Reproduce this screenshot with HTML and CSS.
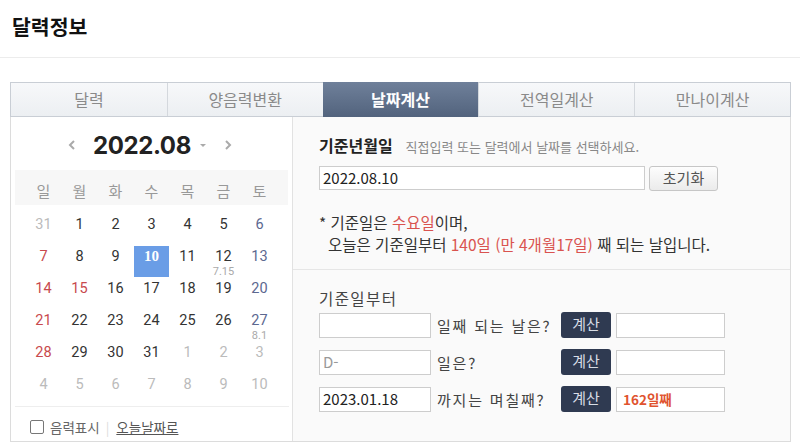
FILE: index.html
```html
<!DOCTYPE html>
<html lang="ko">
<head>
<meta charset="utf-8">
<title>달력정보</title>
<link rel="stylesheet" href="styles.css">
</head>
<body>
<h1 class="title">달력정보</h1>
<div class="widget">
  <ul class="tabs">
    <li class="tab">달력</li>
    <li class="tab">양음력변환</li>
    <li class="tab active">날짜계산</li>
    <li class="tab">전역일계산</li>
    <li class="tab">만나이계산</li>
  </ul>
  <div class="body">
    <div class="cal">
      <div class="cal-head">
        <svg class="arrow" width="8" height="10" viewBox="0 0 8 10"><polyline points="6,1 2,5 6,9" fill="none" stroke="#aaa" stroke-width="2"/></svg>
        <span class="ym">2022.08</span>
        <span class="caret"></span>
        <svg class="arrow next" width="8" height="10" viewBox="0 0 8 10"><polyline points="2,1 6,5 2,9" fill="none" stroke="#aaa" stroke-width="2"/></svg>
      </div>
      <div class="week">
        <span>일</span><span>월</span><span>화</span><span>수</span><span>목</span><span>금</span><span>토</span>
      </div>
      <div class="days">
        <div class="d other"><b>31</b></div>
        <div class="d"><b>1</b></div>
        <div class="d"><b>2</b></div>
        <div class="d"><b>3</b></div>
        <div class="d"><b>4</b></div>
        <div class="d"><b>5</b></div>
        <div class="d sat"><b>6</b></div>

        <div class="d sun"><b>7</b></div>
        <div class="d"><b>8</b></div>
        <div class="d"><b>9</b></div>
        <div class="d sel"><b>10</b></div>
        <div class="d"><b>11</b></div>
        <div class="d"><b>12</b><i>7.15</i></div>
        <div class="d sat"><b>13</b></div>

        <div class="d sun"><b>14</b></div>
        <div class="d sun"><b>15</b></div>
        <div class="d"><b>16</b></div>
        <div class="d"><b>17</b></div>
        <div class="d"><b>18</b></div>
        <div class="d"><b>19</b></div>
        <div class="d sat"><b>20</b></div>

        <div class="d sun"><b>21</b></div>
        <div class="d"><b>22</b></div>
        <div class="d"><b>23</b></div>
        <div class="d"><b>24</b></div>
        <div class="d"><b>25</b></div>
        <div class="d"><b>26</b></div>
        <div class="d sat"><b>27</b><i>8.1</i></div>

        <div class="d sun"><b>28</b></div>
        <div class="d"><b>29</b></div>
        <div class="d"><b>30</b></div>
        <div class="d"><b>31</b></div>
        <div class="d other"><b>1</b></div>
        <div class="d other"><b>2</b></div>
        <div class="d other"><b>3</b></div>

        <div class="d other"><b>4</b></div>
        <div class="d other"><b>5</b></div>
        <div class="d other"><b>6</b></div>
        <div class="d other"><b>7</b></div>
        <div class="d other"><b>8</b></div>
        <div class="d other"><b>9</b></div>
        <div class="d other"><b>10</b></div>
      </div>
      <div class="cal-foot">
        <span class="check"></span>
        <span class="lunar">음력표시</span>
        <span class="sep">|</span>
        <span class="today">오늘날짜로</span>
      </div>
    </div>
    <div class="calc">
      <div class="base">
        <div class="label-row">
          <strong class="label">기준년월일</strong>
          <span class="hint">직접입력 또는 달력에서 날짜를 선택하세요.</span>
        </div>
        <div class="input-row">
          <div class="field wide">2022.08.10</div>
          <div class="btn-reset">초기화</div>
        </div>
        <p class="note">* 기준일은 <em>수요일</em>이며,</p>
        <p class="note indent">오늘은 기준일부터 <em>140일 (만 4개월17일)</em> 째 되는 날입니다.</p>
      </div>
      <div class="ops">
        <div class="ops-title">기준일부터</div>
        <div class="op">
          <div class="field small"></div>
          <span class="op-text">일째 되는 날은?</span>
          <div class="btn-calc">계산</div>
          <div class="field result"></div>
        </div>
        <div class="op">
          <div class="field small placeholder">D-</div>
          <span class="op-text">일은?</span>
          <div class="btn-calc">계산</div>
          <div class="field result"></div>
        </div>
        <div class="op">
          <div class="field small">2023.01.18</div>
          <span class="op-text">까지는 며칠째?</span>
          <div class="btn-calc">계산</div>
          <div class="field result answer">162일째</div>
        </div>
      </div>
    </div>
  </div>
</div>
</body>
</html>
```
FILE: styles.css
```css
* { box-sizing: border-box; }

body {
  margin: 0;
  background: #fff;
  color: #333;
  font-family: "Noto Sans CJK KR", "Noto Sans", sans-serif;
}

.title {
  margin: 0;
  height: 58px;
  padding-left: 12px;
  font-size: 20.5px;
  font-weight: 700;
  line-height: 52px;
  color: #111;
  border-bottom: 1px solid #ececec;
}

.widget {
  margin: 24px 9px 0 10px;
}

/* tabs */
.tabs {
  list-style: none;
  margin: 0;
  padding: 0;
  display: grid;
  grid-template-columns: repeat(5, 1fr);
  height: 35px;
  border: 1px solid #c9ced5;
  background: linear-gradient(#f7f8fa, #eceff2);
}

.tab {
  text-align: center;
  font-size: 16px;
  line-height: 32px;
  color: #8a8a8a;
  border-left: 1px solid #d4d8dd;
}

.tab:first-child { border-left: 0; }

.tab.active {
  margin: -1px 0;
  line-height: 34px;
  color: #fff;
  font-weight: 700;
  border-left: 0;
  background: linear-gradient(#6f809a, #52637d);
}

/* body */
.body {
  display: grid;
  grid-template-columns: 282px 1fr;
  height: 325px;
  border: 1px solid #dcdcdc;
  border-top: 0;
}

/* calendar */
.cal {
  border-right: 1px solid #e2e2e2;
  background: #fff;
}

.cal-head {
  height: 53px;
  display: flex;
  align-items: center;
  padding: 3px 0 0 57px;
}

.ym {
  margin-left: 17px;
  font-family: Inter, "Liberation Sans", sans-serif;
  font-weight: 700;
  font-size: 24px;
  letter-spacing: -0.4px;
  color: #222;
}

.caret {
  margin-left: 9px;
  width: 0;
  height: 0;
  border-left: 3px solid transparent;
  border-right: 3px solid transparent;
  border-top: 3px solid #aaa;
}

.arrow.next { margin-left: 18px; }

.week {
  margin: 0 4px;
  height: 35px;
  background: #f7f7f7;
  display: grid;
  grid-template-columns: repeat(7, 36px);
  justify-content: center;
  align-items: center;
  padding-top: 6px;
}

.week span {
  text-align: center;
  font-size: 15px;
  color: #999;
}

.days {
  margin-top: 9px;
  display: grid;
  grid-template-columns: repeat(7, 36px);
  grid-auto-rows: 32px;
  justify-content: center;
  font-family: Roboto, "Liberation Sans", sans-serif;
}

.d {
  display: flex;
  flex-direction: column;
  align-items: center;
  color: #333;
}

.d b {
  font-weight: 400;
  font-size: 14.5px;
  line-height: 19px;
  margin-top: 1px;
}

.d i {
  font-style: normal;
  font-size: 11px;
  line-height: 12px;
  color: #aaa;
}

.d.sun { color: #c8494d; }
.d.sat { color: #5c6890; }
.d.other { color: #bbb; }

.d.sel {
  margin: 0 0.5px 1px;
  background: #6a9de6;
  color: #fff;
}

.d.sel b {
  font-family: "Liberation Serif", serif;
  font-weight: 700;
  font-size: 15px;
}

.cal-foot {
  margin: 0 3px 0 4px;
  height: 35px;
  border-top: 1px solid #eee;
  display: flex;
  align-items: center;
  padding: 5px 0 0 15px;
  font-size: 13.5px;
  color: #666;
}

.check {
  width: 14px;
  height: 14px;
  border: 1px solid #777;
  border-radius: 2px;
  background: #fff;
  margin-right: 6px;
}

.sep {
  margin: 0 7px 0 6px;
  color: #ddd;
}

.today {
  text-decoration: underline;
  color: #555;
}

/* calculator */
.calc {
  background: #fafafa;
  display: flex;
  flex-direction: column;
}

.base {
  height: 153px;
  border-bottom: 1px solid #e6e6e6;
  padding: 18px 0 0 26px;
}

.label-row {
  display: flex;
  align-items: baseline;
  line-height: 20px;
}

.label {
  font-size: 16px;
  font-weight: 700;
  color: #222;
}

.hint {
  margin-left: 13px;
  font-size: 13px;
  color: #888;
}

.input-row {
  margin-top: 9px;
  display: flex;
  align-items: flex-start;
  gap: 4px;
}

.field {
  height: 24px;
  border: 1px solid #cdcdcd;
  background: #fff;
  font-size: 15px;
  line-height: 22px;
  padding-left: 3px;
  color: #222;
}

.field.wide { width: 326px; }

.btn-reset {
  width: 69px;
  height: 25px;
  border: 1px solid #c6c6c6;
  border-radius: 3px;
  background: linear-gradient(#fdfdfd, #ebebeb);
  text-align: center;
  font-size: 15px;
  line-height: 22px;
  color: #555;
}

.note {
  margin: 0;
  font-size: 15.5px;
  line-height: 22px;
  color: #333;
}

.note:first-of-type { margin-top: 20px; }

.note.indent { padding-left: 9px; }

.note em {
  font-style: normal;
  color: #d9534f;
}

.ops {
  padding: 18px 0 0 26px;
}

.ops-title {
  font-size: 15.5px;
  letter-spacing: 1.4px;
  line-height: 20px;
  color: #444;
}

.op {
  margin-top: 4px;
  display: flex;
  align-items: center;
  height: 26px;
}

.op + .op { margin-top: 11px; }

.op .field { height: 25px; }

.field.small { width: 112px; }

.field.placeholder { color: #999; }

.op-text {
  width: 130px;
  padding-left: 6px;
  font-size: 15px;
  letter-spacing: 1.8px;
  color: #444;
}

.btn-calc {
  width: 50px;
  height: 26px;
  border-radius: 3px;
  background: #2f3a51;
  color: #d8dde6;
  text-align: center;
  font-size: 15px;
  line-height: 24px;
}

.field.result {
  width: 109px;
  margin-left: 5px;
}

.field.answer {
  padding-left: 6px;
  font-size: 13.5px;
  font-weight: 700;
  color: #e0532f;
}
```
